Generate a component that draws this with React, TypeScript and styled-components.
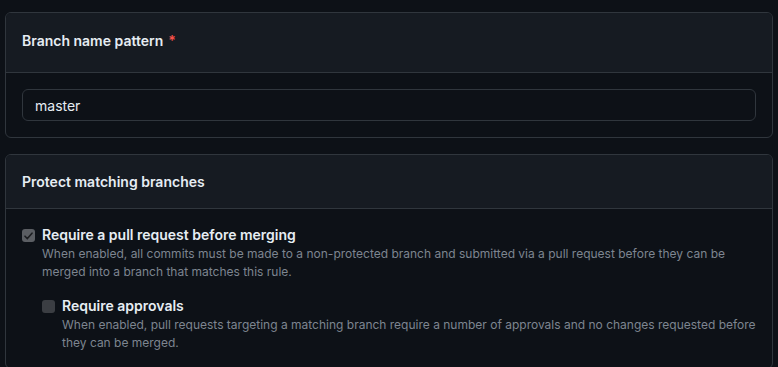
import React from "react";
import styled, { createGlobalStyle } from "styled-components";

const Global = createGlobalStyle`
  html, body { margin: 0; padding: 0; background: #0d1117; }
  body {
    font-family: Inter, "Noto Sans", "Liberation Sans", sans-serif;
    color: #e6edf3;
    -webkit-font-smoothing: antialiased;
  }
`;

const Page = styled.div`
  padding: 12px 5px 0 5px;
  display: flex;
  flex-direction: column;
  gap: 16px;
`;

const Box = styled.section`
  border: 1px solid #30363d;
  border-radius: 6px;
  background: #0d1117;
  overflow: hidden;
`;

const BoxHeader = styled.div<{ $tall?: boolean }>`
  background: #161b22;
  border-bottom: 1px solid #30363d;
  padding: ${(p) => (p.$tall ? "17px 16px 21px" : "16px 16px")};
`;

const Title = styled.h2`
  margin: 0;
  font-size: 14px;
  line-height: 21px;
  font-weight: 600;
  color: #e6edf3;
`;

const Required = styled.span`
  color: #f85149;
  margin-left: 5px;
`;

const BoxBody = styled.div`
  padding: 16px;
`;

const TextInput = styled.input`
  box-sizing: border-box;
  display: block;
  width: 100%;
  height: 32px;
  padding: 0 12px;
  background: #0d1117;
  border: 1px solid #30363d;
  border-radius: 6px;
  color: #e6edf3;
  font-family: inherit;
  font-size: 14px;
  outline: none;
`;

const CheckItem = styled.div<{ $nested?: boolean }>`
  display: flex;
  gap: 7px;
  margin-top: ${(p) => (p.$nested ? "15px" : "0")};
`;

const Box13 = styled.span<{ $checked?: boolean }>`
  flex: none;
  width: 13px;
  height: 13px;
  margin-top: 4px;
  border-radius: 3px;
  box-sizing: border-box;
  background: ${(p) => (p.$checked ? "#5b5e63" : "#3b3e43")};
  display: flex;
  align-items: center;
  justify-content: center;
`;

const CheckText = styled.div`
  display: flex;
  flex-direction: column;
`;

const Label = styled.label`
  font-size: 14px;
  line-height: 20px;
  font-weight: 600;
  color: #e6edf3;
`;

const Note = styled.p`
  margin: 0;
  font-size: 12px;
  line-height: 18px;
  color: #7d8590;
`;

function Checkbox({ checked }: { checked?: boolean }) {
  return (
    <Box13 $checked={checked}>
      {checked && (
        <svg width="9" height="8" viewBox="0 0 9 8">
          <path d="M1 4.2 L3.4 6.6 L8 1.2" fill="none" stroke="#1c1e21" strokeWidth="1.6" strokeLinecap="round" strokeLinejoin="round" />
        </svg>
      )}
    </Box13>
  );
}

export default function App() {
  return (
    <>
      <Global />
      <Page>
        <Box>
          <BoxHeader $tall>
            <Title>
              Branch name pattern<Required>*</Required>
            </Title>
          </BoxHeader>
          <BoxBody>
            <TextInput defaultValue="master" aria-label="Branch name pattern" />
          </BoxBody>
        </Box>
        <Box>
          <BoxHeader>
            <Title>Protect matching branches</Title>
          </BoxHeader>
          <BoxBody>
            <CheckItem>
              <Checkbox checked />
              <CheckText>
                <Label>Require a pull request before merging</Label>
                <Note>
                  When enabled, all commits must be made to a non-protected branch and submitted via a pull request before they can be merged into a branch that matches this rule.
                </Note>
                <CheckItem $nested>
                  <Checkbox />
                  <CheckText>
                    <Label>Require approvals</Label>
                    <Note>
                      When enabled, pull requests targeting a matching branch require a number of approvals and no changes requested before they can be merged.
                    </Note>
                  </CheckText>
                </CheckItem>
              </CheckText>
            </CheckItem>
          </BoxBody>
        </Box>
      </Page>
    </>
  );
}
